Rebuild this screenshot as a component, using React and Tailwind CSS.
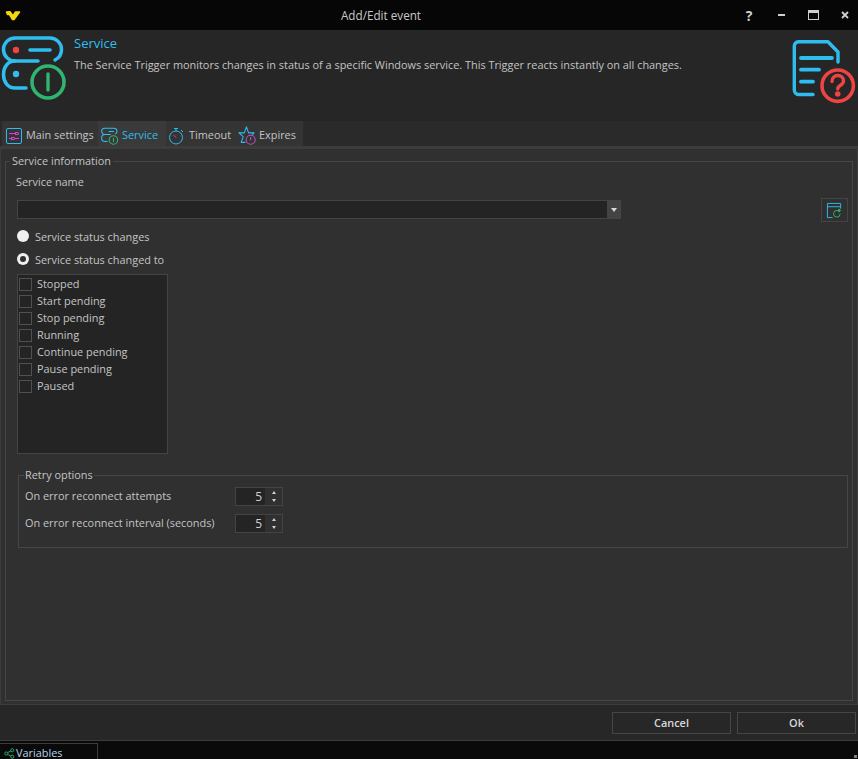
import React from "react";

const statuses = ["Stopped", "Start pending", "Stop pending", "Running", "Continue pending", "Pause pending", "Paused"];

// big service icon in the header
const ServiceIcon = ({ className }) => (
  <svg viewBox="0 0 68 68" fill="none" className={className}>
    <path d="M37 28H14A11.5 11.5 0 0 1 14 5H49A11.5 11.5 0 0 1 60.5 16.5C60.5 21 58 25 54 27" stroke="#2fbdf0" strokeWidth="3.5" strokeLinecap="round" />
    <path d="M14 28C7 28 2.5 34 2.5 41.5C2.5 49 7 55 14 55H25" stroke="#2fbdf0" strokeWidth="3.5" strokeLinecap="round" />
    <circle cx="15" cy="17" r="3.2" fill="#ee4444" />
    <path d="M29 17H49" stroke="#2fbdf0" strokeWidth="3.6" strokeLinecap="round" />
    <circle cx="15" cy="41" r="3.2" fill="#2fbdf0" />
    <circle cx="47" cy="49" r="16" stroke="#2fb56f" strokeWidth="3.6" />
    <path d="M47 41V57" stroke="#2fb56f" strokeWidth="3.4" strokeLinecap="round" />
  </svg>
);

const DocHelpIcon = ({ className }) => (
  <svg viewBox="0 0 66 66" fill="none" className={className}>
    <path d="M22 55.5H7.5A4.5 4.5 0 0 1 3.3 51V7.5A4.5 4.5 0 0 1 7.5 2.7H37L47 13V23" stroke="#2fbdf0" strokeWidth="3.4" strokeLinecap="round" strokeLinejoin="round" />
    <path d="M10 19H41M10 30.7H28M10 42.7H22" stroke="#2fbdf0" strokeWidth="3.8" strokeLinecap="round" />
    <circle cx="46.7" cy="46.7" r="15.7" stroke="#ee4444" strokeWidth="3.6" />
    <path d="M41 42.5C41 34.5 52.5 34.5 52.5 42C52.5 46.5 46.7 46 46.7 50" stroke="#ee4444" strokeWidth="3.4" strokeLinecap="round" />
    <circle cx="46.7" cy="55" r="2.8" fill="#ee4444" />
  </svg>
);

const SlidersIcon = () => (
  <svg viewBox="0 0 16 16" fill="none" className="w-4 h-4 shrink-0">
    <rect x="0.5" y="0.5" width="15" height="15" rx="1.5" stroke="#2fbdf0" />
    <path d="M3 5.5H9M12 5.5H13M3 10.5H5M8 10.5H13" stroke="#e03ad8" />
    <rect x="9.5" y="4.5" width="2.5" height="2" stroke="#e03ad8" />
    <rect x="5.5" y="9.5" width="2.5" height="2" stroke="#e03ad8" />
  </svg>
);

const TabServiceIcon = () => (
  <svg viewBox="0 0 68 68" fill="none" className="w-[18px] h-[18px] shrink-0">
    <path d="M37 28H14A11.5 11.5 0 0 1 14 5H49A11.5 11.5 0 0 1 60.5 16.5C60.5 21 58 25 54 27" stroke="#2fbdf0" strokeWidth="4" />
    <path d="M14 28C7 28 2.5 34 2.5 41.5C2.5 49 7 55 14 55H25" stroke="#2fbdf0" strokeWidth="4" />
    <path d="M29 17H49" stroke="#2fbdf0" strokeWidth="4" />
    <circle cx="47" cy="49" r="16" stroke="#2fb56f" strokeWidth="4" />
    <path d="M47 41V57" stroke="#2fb56f" strokeWidth="4" />
  </svg>
);

const StopwatchIcon = () => (
  <svg viewBox="0 0 18 18" fill="none" className="w-[18px] h-[18px] shrink-0">
    <circle cx="8" cy="10.5" r="6.5" stroke="#2fbdf0" />
    <path d="M6 1.5H10M8 1.5V4M13 3L15 5" stroke="#2fbdf0" />
    <path d="M8 10.5L5.5 8" stroke="#e03ad8" />
  </svg>
);

const StarClockIcon = () => (
  <svg viewBox="0 0 18 18" fill="none" className="w-[19px] h-[19px] shrink-0">
    <path d="M7 15.5H3L5 10L0.8 6.5H6L8 0.8L10 6.5H15.2L13.5 8.5" stroke="#2fbdf0" strokeLinejoin="round" />
    <circle cx="12" cy="13" r="4.3" stroke="#c04fc0" />
    <path d="M12 10.5V13.5" stroke="#c04fc0" />
  </svg>
);

const RefreshWindowIcon = () => (
  <svg viewBox="0 0 18 18" fill="none" className="w-[17px] h-[17px]">
    <path d="M7 16.5H1.5V1.5H15.5V7M1.5 5H15.5" stroke="#2fbdf0" />
    <path d="M15 12.5A3.5 3.5 0 1 1 12 9H15" stroke="#2fb56f" />
    <path d="M13.5 7.5L15.5 9L13.5 10.5Z" fill="#2fb56f" stroke="#2fb56f" />
  </svg>
);

const VariablesIcon = () => (
  <svg viewBox="0 0 12 12" fill="none" className="w-[11px] h-[11px] shrink-0">
    <circle cx="2.5" cy="6" r="1.7" stroke="#2fb56f" />
    <circle cx="9" cy="2.5" r="1.7" stroke="#2fb56f" />
    <circle cx="9" cy="9.5" r="1.7" stroke="#2fb56f" />
    <path d="M4 5L7.5 3.2M4 7L7.5 8.8" stroke="#2fb56f" />
  </svg>
);

const Tab = ({ icon, label, active, className }) => (
  <div className={`flex items-center h-[25px] pt-[4px] ${active ? "bg-[#3a3a3a] text-[#2fbdf0]" : "bg-[#343434] text-[#c4c4c4]"} ${className}`}>
    {icon}
    <span>{label}</span>
  </div>
);

const Spinner = ({ value }) => (
  <div className="flex w-[48px] h-[19px] border border-[#444444] bg-[#303030]">
    <div className="w-[29px] bg-[#242424] text-right pr-[3px] text-[#d0d0d0] leading-[17px] text-[12px]">{value}</div>
    <div className="flex-1 flex flex-col items-center justify-center gap-[5px]">
      <svg viewBox="0 0 4 3" className="w-[4px] h-[3px]"><path d="M2 0L4 3H0Z" fill="#d0d0d0" /></svg>
      <svg viewBox="0 0 4 3" className="w-[4px] h-[3px]"><path d="M0 0H4L2 3Z" fill="#d0d0d0" /></svg>
    </div>
  </div>
);

const Radio = ({ label, checked }) => (
  <div className="flex items-center gap-[6px] h-[16px] text-[#c4c4c4]">
    <span className="w-[12px] h-[12px] rounded-full bg-[#f0f0f0] flex items-center justify-center">
      {checked && <span className="w-[6px] h-[6px] rounded-full bg-[#303030]" />}
    </span>
    <span className="pt-[2px]">{label}</span>
  </div>
);

const App = () => {
  return (
    <div className="w-[858px] h-[759px] overflow-hidden flex flex-col bg-[#0a0a0a] text-[10.9px] text-[#c4c4c4] font-['Open_Sans','Liberation_Sans',sans-serif]">
      {/* title bar */}
      <div className="h-[30px] shrink-0 bg-[#060606] flex items-center pl-[5px] pr-[8px] text-[#cfcfcf]">
        <svg viewBox="0 0 16 11" className="w-[16px] h-[11px] shrink-0">
          <path d="M1.5 2L5 1.8L8 6L10.5 2L14.5 2L9 9.5H7.5L4.5 4.5H2.5Z" fill="#f5d90a" stroke="#f5d90a" strokeWidth="1.5" strokeLinejoin="round" />
        </svg>
        <div className="flex-1 text-center text-[#c8c8c8] text-[11.7px] pr-[3px] pt-[1px]">Add/Edit event</div>
        <div className="flex items-center gap-[22px]">
          <span className="w-[10px] text-center font-bold text-[14px]">?</span>
          <span className="w-[10px] flex justify-center"><span className="w-[7px] h-[2px] bg-[#cfcfcf]" /></span>
          <span className="w-[10px] flex justify-center"><span className="w-[11px] h-[10px] shrink-0 border border-[#cfcfcf] border-t-[3px]" /></span>
          <svg viewBox="0 0 8 8" className="w-[10px] h-[8px]"><path d="M1 1L7 7M7 1L1 7" stroke="#cfcfcf" strokeWidth="1.8" /></svg>
        </div>
      </div>

      {/* header */}
      <div className="h-[91px] shrink-0 bg-[#262626] flex pl-[1px] pr-[1px] pt-[3px]">
        <ServiceIcon className="w-[68px] h-[68px] shrink-0" />
        <div className="pl-[5px] flex-1">
          <div className="text-[#2fbdf0] text-[13px] leading-[20px]">Service</div>
          <div className="mt-[2px] leading-[20px] text-[#c4c4c4]">The Service Trigger monitors changes in status of a specific Windows service. This Trigger reacts instantly on all changes.</div>
        </div>
        <DocHelpIcon className="w-[66px] h-[66px] shrink-0 mt-[6px]" />
      </div>

      {/* tabs */}
      <div className="h-[25px] shrink-0 bg-[#2a2a2a] flex pl-[2px]">
        <Tab icon={<SlidersIcon />} label="Main settings" className="w-[96px] pl-[4px] gap-[4px]" />
        <Tab icon={<TabServiceIcon />} label="Service" active className="w-[68px] pl-[3px] gap-[3px]" />
        <Tab icon={<StopwatchIcon />} label="Timeout" className="w-[71px] pl-[2px] gap-[3px]" />
        <Tab icon={<StarClockIcon />} label="Expires" className="w-[66px] pl-[1px] gap-[2px]" />
      </div>

      {/* tab page */}
      <div className="h-[559px] shrink-0 bg-[#303030] border-t-[3px] border-[#3c3c3c] border-x border-b px-[4px] pt-[4px] pb-[3px]">
        <fieldset className="h-full border border-[#464646] pl-[10px] pr-[4px] min-w-0">
          <legend className="ml-[-6px] px-[2px] leading-[16px]">Service information</legend>
          <div className="pt-[3px] leading-[20px]">Service name</div>

          <div className="flex justify-between items-start mt-[6px] pl-[1px]">
            <div className="flex w-[604px] h-[19px] mt-[2px] border border-[#444444] bg-[#242424] justify-end">
              <div className="w-[13px] h-full bg-[#444444] flex items-center justify-center">
                <span className="w-0 h-0 border-x-[3px] border-x-transparent border-t-[4px] border-t-[#d8d8d8]" />
              </div>
            </div>
            <div className="w-[27px] h-[24px] border border-[#444444] flex items-center justify-center">
              <RefreshWindowIcon />
            </div>
          </div>

          <div className="flex flex-col gap-[7px] mt-[6px] pl-[1px]">
            <Radio label="Service status changes" />
            <Radio label="Service status changed to" checked />
          </div>

          <div className="w-[151px] h-[180px] ml-[1px] mt-[7px] border border-[#444444] bg-[#242424] pl-[1px] pt-[1px]">
            {statuses.map((s) => (
              <div key={s} className="flex items-center gap-[5px] h-[17px]">
                <span className="w-[13px] h-[13px] border border-[#505050]" />
                <span>{s}</span>
              </div>
            ))}
          </div>

          <fieldset className="mt-[13px] ml-[2px] h-[81px] border border-[#464646] px-[6px] min-w-0">
            <legend className="ml-[-1px] px-[1px] leading-[16px]">Retry options</legend>
            <div className="flex items-center justify-between w-[258px] h-[19px] mt-[4px]">
              <span>On error reconnect attempts</span>
              <Spinner value={5} />
            </div>
            <div className="flex items-center justify-between w-[258px] h-[19px] mt-[8px]">
              <span>On error reconnect interval (seconds)</span>
              <Spinner value={5} />
            </div>
          </fieldset>
        </fieldset>
      </div>

      {/* footer buttons */}
      <div className="h-[36px] shrink-0 bg-[#272727] border-b border-[#3c3c3c] flex justify-end items-start gap-[6px] pt-[7px] pr-[2px]">
        <button className="w-[119px] h-[22px] border border-[#464646] text-[#d8d8d8] font-semibold leading-none pt-[1px]">Cancel</button>
        <button className="w-[119px] h-[22px] border border-[#464646] text-[#d8d8d8] font-semibold leading-none pt-[1px]">Ok</button>
      </div>

      {/* bottom dock */}
      <div className="flex-1 min-h-0 flex justify-between items-end pt-[2px] pr-[1px] bg-[#0a0a0a]">
        <div className="w-[98px] h-full border-t border-r border-[#3c3c3c] flex items-center gap-[1px] pl-[4px] pt-[3px] text-[#b9d3e8]">
          <VariablesIcon />
          <span className="leading-[12px]">Variables</span>
        </div>
        <span className="w-[3px] h-[3px] mb-[1px] bg-[#808080]" />
      </div>
    </div>
  );
};

export default App;
